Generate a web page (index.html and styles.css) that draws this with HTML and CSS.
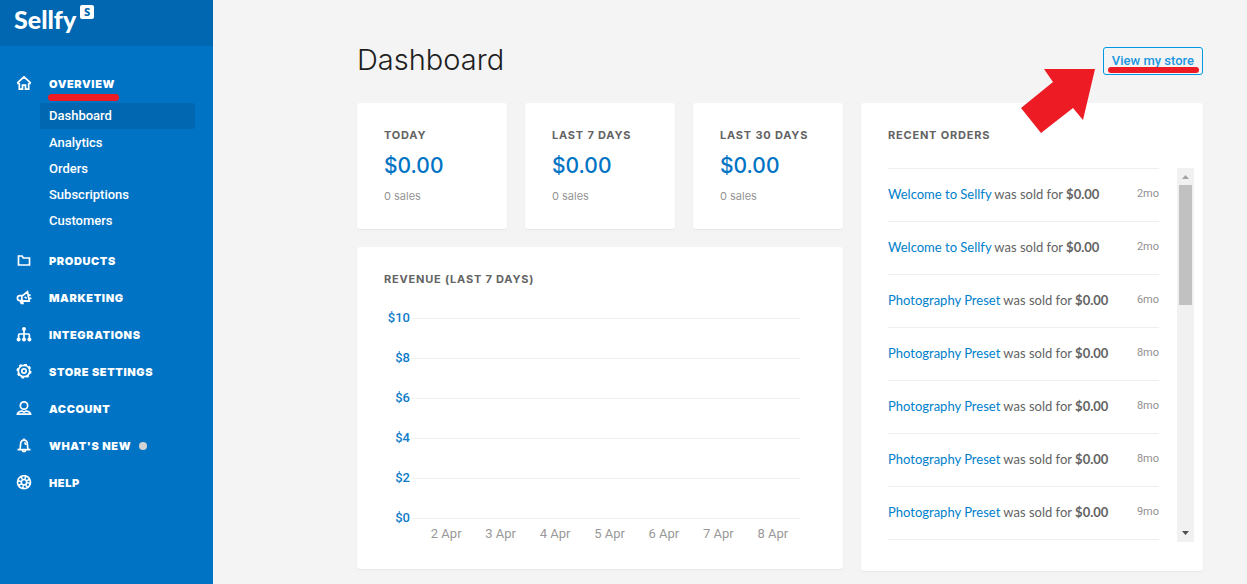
FILE: index.html
```html
<!DOCTYPE html>
<html lang="en">
<head>
<meta charset="utf-8">
<meta name="viewport" content="width=device-width, initial-scale=1">
<title>Dashboard</title>
<link rel="stylesheet" href="styles.css">
</head>
<body>
<div class="app">
  <aside class="sidebar">
    <a class="logo" href="#"><span class="logo-name">Sellfy</span><span class="logo-badge">S</span></a>
    <nav class="nav">
      <a class="nav-item" href="#">
        <svg class="icon" viewBox="0 0 16 16"><path d="M1.200 7.200 8 .8l6.800 6.400M1.200 7.500H3M13 7.500h1.800M3.300 7v6.200h3.200V9.200h3v4h3.200V7"/></svg>
        <span class="marked">OVERVIEW</span>
      </a>
      <div class="subnav">
        <a class="subnav-item current" href="#">Dashboard</a>
        <a class="subnav-item" href="#">Analytics</a>
        <a class="subnav-item" href="#">Orders</a>
        <a class="subnav-item" href="#">Subscriptions</a>
        <a class="subnav-item" href="#">Customers</a>
      </div>
      <a class="nav-item" href="#">
        <svg class="icon" viewBox="0 0 16 16"><path d="M2.500 3h3.600l1.200 2h6.200v7h-11z"/></svg>
        <span>PRODUCTS</span>
      </a>
      <a class="nav-item" href="#">
        <svg class="icon" viewBox="0 0 16 16"><path d="M11.500 1.800 6.500 5.600H3.600A2.500 2.500 0 0 0 1.400 8c0 1.600 1.100 2.500 2.400 2.500l9.400.5zM5.800 6v4.400M4 10.600l1.400 2.800h1.500l-.6-2.600M12.600 5.600l2-.8M13.400 8.400h2"/><path d="m8.600 7 2 1.200"/></svg>
        <span>MARKETING</span>
      </a>
      <a class="nav-item" href="#">
        <svg class="icon" viewBox="0 0 16 16"><path d="M8 2v10M2.600 12V8q0-1 1-1h8.800q1 0 1 1v4"/><circle class="solid" cx="8" cy="2" r="2"/><circle class="solid" cx="2.600" cy="12.600" r="2"/><circle class="solid" cx="8" cy="12.600" r="2"/><circle class="solid" cx="13.400" cy="12.600" r="2"/></svg>
        <span>INTEGRATIONS</span>
      </a>
      <a class="nav-item" href="#">
        <svg class="icon" viewBox="0 0 16 16"><circle cx="8" cy="7" r="5.700"/><circle cx="8" cy="7" r="2.200"/><circle class="teeth" cx="8" cy="7" r="6.800"/></svg>
        <span>STORE SETTINGS</span>
      </a>
      <a class="nav-item" href="#">
        <svg class="icon" viewBox="0 0 16 16"><circle cx="8" cy="4.500" r="3.700"/><path d="M1.400 13.100c.2-2 2-2.700 4.200-3.100L8 11l2.400-1c2.200.4 4 1.100 4.200 3.100z"/></svg>
        <span>ACCOUNT</span>
      </a>
      <a class="nav-item" href="#">
        <svg class="icon" viewBox="0 0 16 16"><path d="M1.500 11.700h13M3.500 11.500q1-1 1-4.300c0-3 1.100-5 3.500-5s3.500 2 3.500 5q0 3.300 1 4.300M8 .4v2M6.400 12.200c0 1.800 3.200 1.800 3.200 0M8.400 4.600q1.200.3 1.200 2.500"/></svg>
        <span>WHAT'S NEW</span><i class="dot"></i>
      </a>
      <a class="nav-item" href="#">
        <svg class="icon" viewBox="0 0 16 16"><circle cx="8" cy="7.200" r="6.500"/><circle cx="8" cy="7.200" r="2.700"/><circle class="ring" cx="8" cy="7.200" r="4.600"/></svg>
        <span>HELP</span>
      </a>
    </nav>
  </aside>

  <main class="main">
    <header class="page-head">
      <h1 class="title">Dashboard</h1>
      <div class="store">
        <button class="store-button" type="button">View my store</button>
        <svg class="arrow" viewBox="0 0 74 64"><path d="M74 0H23l9 13L0 39l20 25 32-25 10 12z"/></svg>
      </div>
    </header>
    <div class="board">
      <div class="column">
        <div class="stats">
          <section class="card stat"><h2 class="label">TODAY</h2><p class="amount">$0.00</p><p class="sales">0 sales</p></section>
          <section class="card stat"><h2 class="label">LAST 7 DAYS</h2><p class="amount">$0.00</p><p class="sales">0 sales</p></section>
          <section class="card stat"><h2 class="label">LAST 30 DAYS</h2><p class="amount">$0.00</p><p class="sales">0 sales</p></section>
        </div>
        <section class="card revenue">
          <h2 class="label">REVENUE (LAST 7 DAYS)</h2>
          <div class="chart">
            <div class="tick">$10</div>
            <div class="tick">$8</div>
            <div class="tick">$6</div>
            <div class="tick">$4</div>
            <div class="tick">$2</div>
            <div class="tick">$0</div>
          </div>
          <div class="dates"><span>2 Apr</span><span>3 Apr</span><span>4 Apr</span><span>5 Apr</span><span>6 Apr</span><span>7 Apr</span><span>8 Apr</span></div>
        </section>
      </div>
      <section class="card recent">
        <h2 class="label">RECENT ORDERS</h2>
        <div class="scroller">
          <ul class="orders">
            <li class="order"><span><a href="#">Welcome to Sellfy</a> was sold for <b>$0.00</b></span><time>2mo</time></li>
            <li class="order"><span><a href="#">Welcome to Sellfy</a> was sold for <b>$0.00</b></span><time>2mo</time></li>
            <li class="order"><span><a href="#">Photography Preset</a> was sold for <b>$0.00</b></span><time>6mo</time></li>
            <li class="order"><span><a href="#">Photography Preset</a> was sold for <b>$0.00</b></span><time>8mo</time></li>
            <li class="order"><span><a href="#">Photography Preset</a> was sold for <b>$0.00</b></span><time>8mo</time></li>
            <li class="order"><span><a href="#">Photography Preset</a> was sold for <b>$0.00</b></span><time>8mo</time></li>
            <li class="order"><span><a href="#">Photography Preset</a> was sold for <b>$0.00</b></span><time>9mo</time></li>
          </ul>
          <div class="scrollbar">
            <svg class="scroll-arrow up" viewBox="0 0 17 17"><path d="M5 11h7L8.500 7z"/></svg>
            <div class="thumb"></div>
            <svg class="scroll-arrow down" viewBox="0 0 17 17"><path d="M5 6h7l-3.500 4z"/></svg>
          </div>
        </div>
      </section>
    </div>
  </main>
</div>
</body>
</html>
```
FILE: styles.css
```css
* { box-sizing: border-box; }
body {
  margin: 0;
  background: #f4f4f4;
  color: #636363;
  font: 13px/20px Lato, "Liberation Sans", sans-serif;
}
h1, h2, p, ul { margin: 0; padding: 0; }
a { color: #0080cb; text-decoration: none; }
.app { display: flex; min-height: 100vh; }

.sidebar { flex: 0 0 213px; background: #0073c4; color: #fff; }
.logo {
  display: flex;
  align-items: flex-start;
  gap: 4px;
  height: 46px;
  padding: 5px 14px;
  background: #0067b0;
  color: #fff;
}
.logo-name { font: 900 25px/28px Lato, sans-serif; }
.logo-badge {
  width: 14px;
  height: 14px;
  border-radius: 2px;
  background: #fff;
  color: #0067b0;
  font: 800 11px/14px "Noto Sans", sans-serif;
  text-align: center;
}
.nav { padding-top: 19px; }
.nav-item {
  display: flex;
  align-items: center;
  height: 37px;
  padding-left: 16px;
  color: #fff;
  font: 900 11px/16px Inter, sans-serif;
  letter-spacing: 0.6px;
}
.icon {
  width: 16px;
  height: 16px;
  margin-right: 17px;
  fill: none;
  stroke: #fff;
  stroke-width: 1.7;
}
.icon .solid { fill: #fff; stroke: none; }
.icon .teeth { stroke-width: 1.5; stroke-dasharray: 2.700 2.641; }
.icon .ring { stroke-width: 3; stroke-dasharray: 1.500 2.113; }
.dot { width: 8px; height: 8px; margin-left: 8px; border-radius: 50%; background: #d3d3d3; }
.marked { position: relative; }
.marked::after {
  content: "";
  position: absolute;
  left: -1px;
  right: -4px;
  top: 18px;
  height: 7px;
  border-radius: 4px;
  background: #ed1c24;
}
.subnav { padding: 1px 18px 8px 40px; }
.subnav-item {
  display: block;
  height: 26px;
  padding-left: 9px;
  border-radius: 3px;
  color: #fff;
  font: 500 13px/26px Roboto, sans-serif;
}
.subnav-item.current { margin-bottom: 1px; background: #0067b0; }

.main { flex: 1; min-width: 0; padding: 40px 44px 13px 144px; }
.page-head { display: flex; justify-content: space-between; align-items: flex-start; height: 63px; }
.title { color: #1e1e1e; font: 300 29px/40px Inter, sans-serif; }
.store { position: relative; padding-top: 7px; }
.store-button {
  position: relative;
  height: 28px;
  padding: 0 8px;
  border: 1px solid #0099e5;
  border-radius: 3px;
  background: transparent;
  color: #1b98e0;
  font: 500 13px/26px Roboto, sans-serif;
}
.store-button::after {
  content: "";
  position: absolute;
  left: 4px;
  right: 3px;
  bottom: 1px;
  height: 6px;
  border-radius: 3px;
  background: #ed1c24;
}
.arrow { position: absolute; top: 29px; right: 108px; width: 74px; height: 64px; fill: #ed1c24; }

.board { display: grid; grid-template-columns: 486fr 342fr; gap: 18px; }
.column { display: flex; flex-direction: column; gap: 18px; padding-bottom: 2px; }
.card { border-radius: 3px; background: #fff; box-shadow: 0 1px 2px rgba(0, 0, 0, 0.06); }
.stats { display: grid; grid-template-columns: repeat(3, 1fr); gap: 18px; }
.stat { height: 126px; padding: 22px 0 0 27px; }
.label { font: 700 11px/20px Inter, sans-serif; letter-spacing: 0.8px; white-space: nowrap; }
.amount { color: #0073c4; font: 500 21px/28px Inter, sans-serif; padding-top: 7px; }
.sales { color: #959595; font: 400 11px/20px Inter, sans-serif; padding-top: 6px; }

.revenue { flex: 1; padding: 22px 43px 24px 27px; }
.chart { padding-top: 9px; }
.tick {
  display: grid;
  grid-template-columns: 26px 1fr;
  align-items: center;
  height: 40px;
  color: #0f7cca;
  font: 500 13px/20px Roboto, sans-serif;
  text-align: right;
}
.tick::after { content: ""; height: 1px; margin-left: 1px; background: #f2f2f2; }
.dates { display: grid; grid-template-columns: repeat(7, 1fr); margin-top: -14px; padding-left: 35px; color: #999; font-family: Roboto, sans-serif; text-align: center; }

.recent { padding: 22px 9px 29px 27px; }
.scroller { display: flex; align-items: flex-start; gap: 18px; margin-top: 23px; }
.orders { flex: 1; list-style: none; border-top: 1px solid #efefef; }
.order { display: flex; justify-content: space-between; height: 53px; padding-top: 15px; border-bottom: 1px solid #efefef; }
.order time { color: #909090; font: 11px/20px Roboto, sans-serif; }
.scrollbar { display: flex; flex-direction: column; width: 17px; height: 374px; background: #f1f1f1; }
.scroll-arrow { width: 17px; height: 17px; fill: #a3a3a3; }
.down { margin-top: auto; fill: #505050; }
.thumb { height: 120px; margin: 0 2px; background: #c1c1c1; }
```
